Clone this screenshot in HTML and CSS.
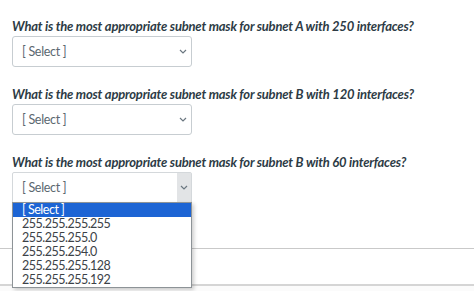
FILE: index.html
```html
<!DOCTYPE html>
<html lang="en">
<head>
  <meta charset="UTF-8" />
  <title>Subnet quiz</title>
  <link rel="stylesheet" href="styles.css">
</head>
<body>
  <div class="quiz">
    <div class="question">
      <p class="prompt">What is the most appropriate subnet mask for subnet A with 250 interfaces?</p>
      <div class="select">
        <span class="value">[ Select ]</span>
        <span class="arrow"><svg width="8" height="5" viewBox="0 0 8 5"><path d="M1 1l3 3 3-3" fill="none" stroke="#6b7780" stroke-width="1.2"/></svg></span>
      </div>
    </div>
    <div class="question">
      <p class="prompt">What is the most appropriate subnet mask for subnet B with 120 interfaces?</p>
      <div class="select">
        <span class="value">[ Select ]</span>
        <span class="arrow"><svg width="8" height="5" viewBox="0 0 8 5"><path d="M1 1l3 3 3-3" fill="none" stroke="#6b7780" stroke-width="1.2"/></svg></span>
      </div>
    </div>
    <div class="question">
      <p class="prompt">What is the most appropriate subnet mask for subnet B with 60 interfaces?</p>
      <div class="select open">
        <span class="value">[ Select ]</span>
        <span class="arrow"><svg width="8" height="5" viewBox="0 0 8 5"><path d="M1 1l3 3 3-3" fill="none" stroke="#6b7780" stroke-width="1.2"/></svg></span>
        <ul class="options">
          <li class="selected">[ Select ]</li>
          <li>255.255.255.255</li>
          <li>255.255.255.0</li>
          <li>255.255.254.0</li>
          <li>255.255.255.128</li>
          <li>255.255.255.192</li>
        </ul>
      </div>
    </div>
  </div>
  <div class="divider"></div>
  <div class="footer"></div>
</body>
</html>
```

FILE: styles.css
```css
body {
  margin: 0;
  font-family: Lato, "Open Sans", sans-serif;
  background-color: white;
  color: #2d3b45;
}
.quiz {
  padding: 16px 12px 0;
}
.question {
  margin-bottom: 17px;
}
.prompt {
  margin: 0;
  font-size: 13px;
  line-height: 20px;
  letter-spacing: -0.2px;
  font-weight: bold;
  font-style: italic;
}
.select {
  position: relative;
  box-sizing: border-box;
  width: 180px;
  height: 31px;
  border: 1px solid #c7cdd1;
  border-radius: 3px;
  display: flex;
  align-items: center;
  justify-content: space-between;
  padding-left: 9px;
}
.value {
  font-size: 12.5px;
  letter-spacing: -0.3px;
  color: #5b6770;
}
.arrow {
  display: flex;
  align-items: center;
  justify-content: center;
  width: 14px;
  height: 100%;
  margin-right: 1px;
}
.select.open {
  border-color: #d4d8db;
  border-radius: 2px 2px 0 0;
}
.select.open .arrow {
  background-color: #e2e4e6;
  margin-right: 0;
}
.options {
  position: absolute;
  top: 100%;
  left: -1px;
  width: 180px;
  box-sizing: border-box;
  margin: 0;
  padding: 0;
  list-style: none;
  background-color: white;
  border: 1px solid #8d9397;
  box-shadow: 2px 2px 4px rgba(0, 0, 0, 0.2);
  z-index: 2;
}
.options li {
  font-size: 12.5px;
  line-height: 14px;
  letter-spacing: -0.5px;
  padding-left: 9px;
  color: #3c4247;
}
.options li.selected {
  background-color: #1c64d4;
  color: white;
}
.divider {
  margin-top: 45px;
  border-top: 1px solid #c9c9c9;
  height: 35px;
}
.footer {
  border-top: 2px solid #d5d5d5;
  height: 5px;
  background-color: #fbfbfb;
}
```
